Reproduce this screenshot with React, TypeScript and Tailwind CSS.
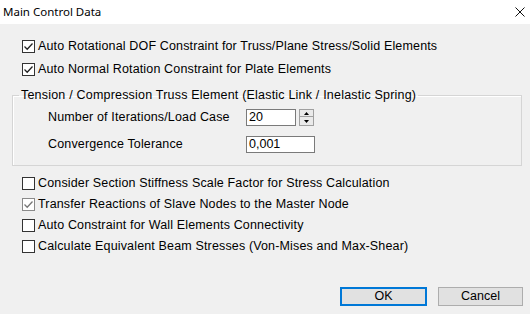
import React from 'react';

const font = { fontFamily: '"Liberation Sans", Arial, sans-serif' };

const CheckBox: React.FC<{ checked?: boolean; dim?: boolean }> = ({ checked, dim }) => (
  <div
    className={`w-[13px] h-[13px] bg-white border shrink-0 flex items-center justify-center ${
      dim ? 'border-[#8a8a8a]' : 'border-[#333333]'
    }`}
  >
    {checked && (
      <svg width="11" height="11" viewBox="0 0 11 11">
        <polyline
          points="1.5,5.5 4.2,8.2 9.5,2.5"
          fill="none"
          stroke={dim ? '#777777' : '#222222'}
          strokeWidth="1.3"
        />
      </svg>
    )}
  </div>
);

const CheckRow: React.FC<{ label: string; checked?: boolean; dim?: boolean; h: string }> = ({
  label,
  checked,
  dim,
  h,
}) => (
  <div className={`flex items-center gap-[3px] pl-[22px] ${h}`}>
    <CheckBox checked={checked} dim={dim} />
    <span className="text-[12.5px] tracking-[0.15px] text-black leading-none whitespace-nowrap">{label}</span>
  </div>
);

const Spinner: React.FC = () => (
  <div className="flex flex-col ml-[3px] w-[15px] h-[17px]">
    <div className="h-[8px] border border-[#a0a0a0] bg-[#eaeaea] flex items-center justify-center">
      <svg width="5" height="3" viewBox="0 0 5 3">
        <polygon points="2.5,0 5,3 0,3" fill="#000" />
      </svg>
    </div>
    <div className="h-[9px] border border-t-0 border-[#a0a0a0] bg-[#eaeaea] flex items-center justify-center">
      <svg width="5" height="3" viewBox="0 0 5 3">
        <polygon points="0,0 5,0 2.5,3" fill="#000" />
      </svg>
    </div>
  </div>
);

export default function App() {
  return (
    <div className="w-[530px] h-[314px] bg-[#f0f0f0] flex flex-col overflow-hidden" style={font}>
      {/* title bar */}
      <div className="h-[24px] bg-white flex items-center justify-between pl-[3px] pr-[4px]">
        <span className="text-[11.5px] text-black" style={{ fontFamily: '"Noto Sans", "Open Sans", sans-serif' }}>
          Main Control Data
        </span>
        <svg width="10" height="10" viewBox="0 0 10 10" className="mr-[1px]">
          <path d="M0.5 0.5 L9.5 9.5 M9.5 0.5 L0.5 9.5" stroke="#111" strokeWidth="1" />
        </svg>
      </div>

      <div className="flex flex-col pt-[11px]">
        <CheckRow h="h-[23px]" checked label="Auto Rotational DOF Constraint for Truss/Plane Stress/Solid Elements" />
        <CheckRow h="h-[23px]" checked label="Auto Normal Rotation Constraint for Plate Elements" />

        <fieldset className="mx-[12px] mt-[7px] w-[510px] h-[78px] border border-[#d5d5d5] shadow-[inset_1px_1px_0_#ffffff]">
          <legend className="ml-[6px] px-[2px] text-[12.5px] tracking-[0.2px] leading-[14px] text-black whitespace-nowrap">
            Tension / Compression Truss Element (Elastic Link / Inelastic Spring)
          </legend>
          <div className="pl-[35px] flex flex-col">
            <div className="flex items-center h-[17px] mt-[7px]">
              <span className="w-[198px] text-[12.5px] tracking-[0.15px] text-black">Number of Iterations/Load Case</span>
              <div className="w-[50px] h-[17px] bg-white border border-[#7a7a7a] flex items-center pl-[2px] text-[12.5px]">
                20
              </div>
              <Spinner />
            </div>
            <div className="flex items-center h-[17px] mt-[10px]">
              <span className="w-[198px] text-[12.5px] tracking-[0.15px] text-black">Convergence Tolerance</span>
              <div className="w-[69px] h-[17px] bg-white border border-[#7a7a7a] flex items-center pl-[2px] text-[12.5px]">
                0,001
              </div>
            </div>
          </div>
        </fieldset>

        <div className="flex flex-col mt-[7px]">
          <CheckRow h="h-[21px]" label="Consider Section Stiffness Scale Factor for Stress Calculation" />
          <CheckRow h="h-[21px]" checked dim label="Transfer Reactions of Slave Nodes to the Master Node" />
          <CheckRow h="h-[21px]" label="Auto Constraint for Wall Elements Connectivity" />
          <CheckRow h="h-[21px]" label="Calculate Equivalent Beam Stresses (Von-Mises and Max-Shear)" />
        </div>

        <div className="flex justify-end gap-[11px] pr-[7px] mt-[30px]">
          <button className="w-[87px] h-[19px] bg-[#e1e1e1] border-2 border-[#0078d7] text-[12.5px] text-black flex items-center justify-center">
            OK
          </button>
          <button className="w-[85px] h-[19px] bg-[#e1e1e1] border border-[#adadad] text-[12.5px] text-black flex items-center justify-center">
            Cancel
          </button>
        </div>
      </div>
    </div>
  );
}
